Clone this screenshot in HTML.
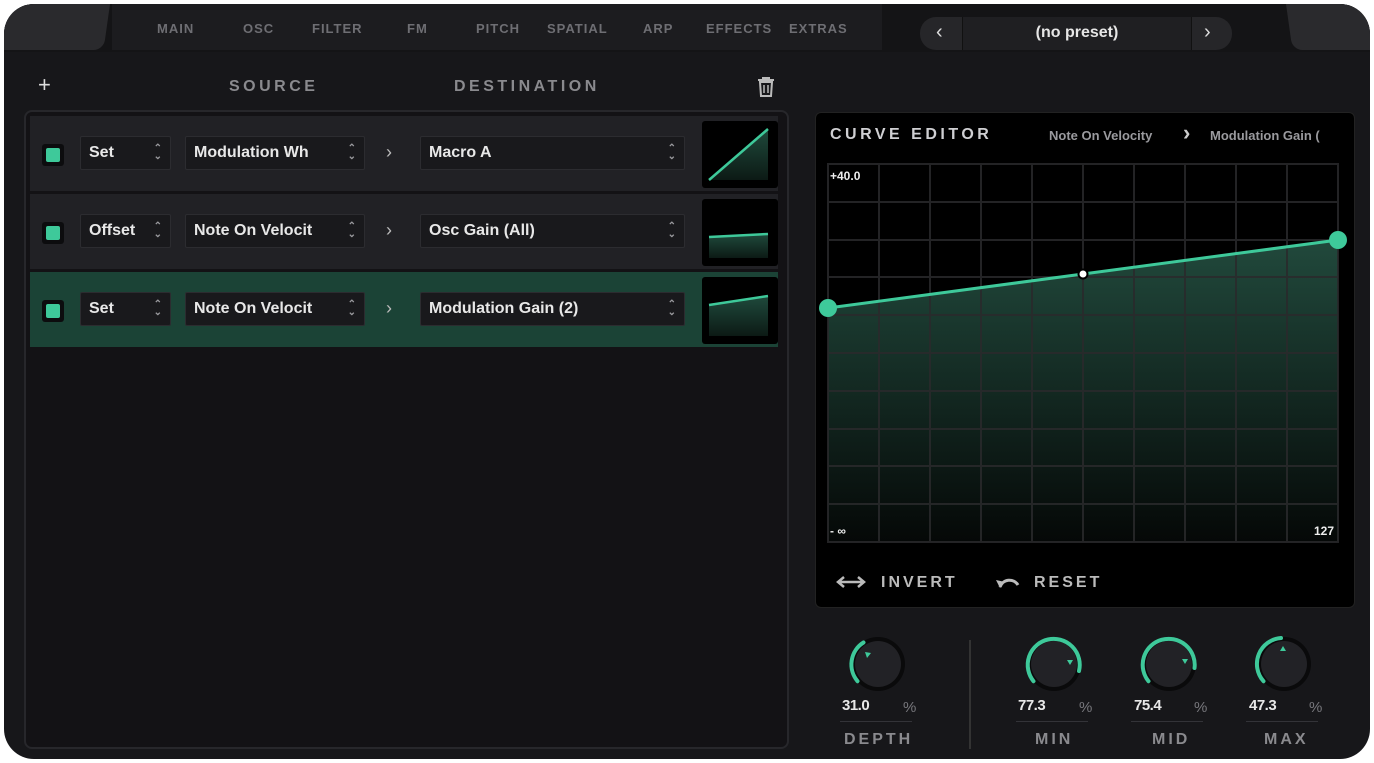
<!DOCTYPE html>
<html><head><meta charset="utf-8"><style>
*{margin:0;padding:0;box-sizing:border-box}
body{width:1374px;height:763px;background:#fff;position:relative;overflow:hidden;font-family:"Liberation Sans",sans-serif;font-weight:bold}
.win{position:absolute;left:4px;top:4px;width:1366px;height:755px;border-radius:30px;background:#17171a;overflow:hidden}
.abs{position:absolute}
.nav{color:#6e6e73;font-size:13px;letter-spacing:1px;top:17px}
.hdr{color:#8a8a8e;font-size:16px;letter-spacing:3.5px;top:74px}
.row{position:absolute;left:30px;width:748px;height:75px;background:#212125}
.dd{position:absolute;top:20px;height:34px;background:#19191c;border:1px solid #2c2c30;border-radius:2px;color:#e8e8e8;font-size:16px;line-height:32px;padding-left:8px;white-space:nowrap;overflow:hidden}
.dd .ud{position:absolute;right:8px;top:0;color:#9a9a9e;font-size:10px;line-height:8px;padding-top:8px;text-align:center}
.cb{position:absolute;left:12px;top:28px;width:22px;height:22px;background:#0c0c0e;border-radius:3px}
.cb:after{content:"";position:absolute;left:4px;top:4px;width:14px;height:14px;background:#3ec99a;border-radius:2px}
.arr{position:absolute;left:356px;top:26px;color:#bbb;font-size:18px;font-weight:normal}
.th{position:absolute;left:672px;top:5px;width:76px;height:67px;background:#000;border-radius:3px}
.val{color:#e8e8e8;font-size:15px;top:693px;letter-spacing:-0.5px}
.pc{color:#77777c;font-size:15px;top:695px;font-weight:normal}
.lb{color:#8a8a8e;font-size:16px;letter-spacing:3px;top:727px}
.ul{height:1px;background:#333338;top:717px}
</style></head><body>
<div class="win">
 <div class="abs" style="left:0;top:0;width:1366px;height:48px;background:#141416"></div>
 <div class="abs" style="left:0;top:0;width:110px;height:46px;background:#2a2a2d;border-bottom-right-radius:10px;transform:skewX(-8deg);transform-origin:top left;left:-4px"></div>
 <div class="abs" style="left:1282px;top:0;width:100px;height:46px;background:#2a2a2d;border-bottom-left-radius:10px;transform:skewX(8deg);transform-origin:top left"></div>
 <div class="abs" style="left:108px;top:0;width:770px;height:46px;background:#1c1c1f"></div>
 <div class="abs nav" style="left:153px">MAIN</div>
 <div class="abs nav" style="left:239px">OSC</div>
 <div class="abs nav" style="left:308px">FILTER</div>
 <div class="abs nav" style="left:403px">FM</div>
 <div class="abs nav" style="left:472px">PITCH</div>
 <div class="abs nav" style="left:543px">SPATIAL</div>
 <div class="abs nav" style="left:639px">ARP</div>
 <div class="abs nav" style="left:702px">EFFECTS</div>
 <div class="abs nav" style="left:785px">EXTRAS</div>
 <div class="abs" style="left:916px;top:13px;width:312px;height:33px;background:#262629;border-radius:16px"></div>
 <div class="abs" style="left:958px;top:13px;width:230px;height:33px;background:#1f1f22;border-left:1px solid #111;border-right:1px solid #111"></div>
 <div class="abs" style="left:932px;top:17px;color:#ddd;font-size:20px;font-weight:normal">‹</div>
 <div class="abs" style="left:1200px;top:17px;color:#ddd;font-size:20px;font-weight:normal">›</div>
 <div class="abs" style="left:958px;top:20px;width:230px;text-align:center;color:#e6e6e6;font-size:16px">(no preset)</div>

 <div class="abs" style="left:34px;top:68px;color:#ddd;font-size:22px;font-weight:normal">+</div>
 <div class="abs hdr" style="left:225px">SOURCE</div>
 <div class="abs hdr" style="left:450px">DESTINATION</div>
 <svg class="abs" style="left:752px;top:72px" width="20" height="22" viewBox="0 0 20 22"><path d="M2 4h16M7 4V2h6v2M4 6l1 14h10l1-14z" fill="none" stroke="#bbb" stroke-width="2"/><path d="M8 9v8M12 9v8" stroke="#bbb" stroke-width="1.5"/></svg>

 <div class="abs" style="left:20px;top:106px;width:765px;height:639px;background:#131215;border:2px solid #27272b;border-radius:8px"></div>
 <div class="row" style="left:26px;top:112px">
  <div class="cb"></div>
  <div class="dd" style="left:50px;width:91px">Set<div class="ud">⌃<br>⌄</div></div>
  <div class="dd" style="left:155px;width:180px">Modulation Wh<div class="ud">⌃<br>⌄</div></div>
  <div class="arr">›</div>
  <div class="dd" style="left:390px;width:265px">Macro A<div class="ud">⌃<br>⌄</div></div>
  <div class="th"><svg width="76" height="67"><defs><linearGradient id="g" x1="0" y1="0" x2="0" y2="1"><stop offset="0" stop-color="#1f4a3c"/><stop offset="1" stop-color="#0c1a15"/></linearGradient></defs><path d="M7 59L66 8V59Z" fill="url(#g)"/><path d="M7 59L66 8" stroke="#3ec99a" stroke-width="2.5"/></svg></div>
 </div>
 <div class="row" style="left:26px;top:190px">
  <div class="cb"></div>
  <div class="dd" style="left:50px;width:91px">Offset<div class="ud">⌃<br>⌄</div></div>
  <div class="dd" style="left:155px;width:180px">Note On Velocit<div class="ud">⌃<br>⌄</div></div>
  <div class="arr">›</div>
  <div class="dd" style="left:390px;width:265px">Osc Gain (All)<div class="ud">⌃<br>⌄</div></div>
  <div class="th"><svg width="76" height="67"><path d="M7 38L66 35V59H7Z" fill="url(#g)"/><path d="M7 38L66 35" stroke="#3ec99a" stroke-width="2.5"/></svg></div>
 </div>
 <div class="row" style="left:26px;top:268px;background:#1b4336">
  <div class="cb"></div>
  <div class="dd" style="left:50px;width:91px">Set<div class="ud">⌃<br>⌄</div></div>
  <div class="dd" style="left:155px;width:180px">Note On Velocit<div class="ud">⌃<br>⌄</div></div>
  <div class="arr">›</div>
  <div class="dd" style="left:390px;width:265px">Modulation Gain (2)<div class="ud">⌃<br>⌄</div></div>
  <div class="th"><svg width="76" height="67"><path d="M7 28L66 19V59H7Z" fill="url(#g)"/><path d="M7 28L66 19" stroke="#3ec99a" stroke-width="2.5"/></svg></div>
 </div>

 <div class="abs" style="left:811px;top:108px;width:540px;height:496px;background:#000;border:1px solid #222;border-radius:6px"></div>
 <div class="abs" style="left:826px;top:122px;color:#cfcfd2;font-size:16px;letter-spacing:3.5px">CURVE EDITOR</div>
 <div class="abs" style="left:1045px;top:124px;color:#9a9a9e;font-size:13px">Note On Velocity</div>
 <div class="abs" style="left:1179px;top:116px;color:#ccc;font-size:22px">›</div>
 <div class="abs" style="left:1206px;top:124px;color:#9a9a9e;font-size:13px">Modulation Gain (</div>
 <svg class="abs" style="left:0;top:0" width="1366" height="755">
  <defs><linearGradient id="cg" x1="0" y1="0" x2="0" y2="1"><stop offset="0" stop-color="#21493c"/><stop offset="1" stop-color="#050807"/></linearGradient></defs>
  <path d="M824 304L1334 236V538H824Z" fill="url(#cg)"/>
  <g stroke="#2a2a2c" stroke-width="2" fill="none" opacity="0.85">
   <rect x="824" y="160" width="510" height="378"/>
   <path d="M875 160V538M926 160V538M977 160V538M1028 160V538M1079 160V538M1130 160V538M1181 160V538M1232 160V538M1283 160V538"/>
   <path d="M824 198H1334M824 236H1334M824 273H1334M824 311H1334M824 349H1334M824 387H1334M824 425H1334M824 462H1334M824 500H1334"/>
  </g>
  <path d="M824 304L1334 236" stroke="#3ec99a" stroke-width="3"/>
  <circle cx="824" cy="304" r="9" fill="#3ec99a"/>
  <circle cx="1334" cy="236" r="9" fill="#3ec99a"/>
  <circle cx="1079" cy="270" r="4.5" fill="#fff" stroke="#000" stroke-width="2"/>
  <text x="826" y="176" fill="#eee" font-size="12" font-weight="bold" font-family="Liberation Sans">+40.0</text>
  <text x="826" y="531" fill="#eee" font-size="12" font-weight="bold" font-family="Liberation Sans">- ∞</text>
  <text x="1310" y="531" fill="#eee" font-size="12" font-weight="bold" font-family="Liberation Sans">127</text>
  <path d="M834 578h26M840 573l-6 5 6 5M854 573l6 5-6 5" stroke="#bbb" stroke-width="2.5" fill="none"/>
  <path d="M996 583a10 10 0 0 1 18 -2" stroke="#bbb" stroke-width="3" fill="none"/><path d="M992 576l4 8 5-6z" fill="#bbb"/>
  <line x1="966" y1="636" x2="966" y2="745" stroke="#333" stroke-width="2"/>
 </svg>
 <div class="abs" style="left:877px;top:570px;color:#bbb;font-size:16px;letter-spacing:3px">INVERT</div>
 <div class="abs" style="left:1030px;top:570px;color:#bbb;font-size:16px;letter-spacing:3px">RESET</div>

 <svg class="abs" style="left:0;top:0" width="1366" height="755">
  <g stroke-linecap="round">
   <circle cx="874" cy="660" r="27" fill="#0a0a0b"/><circle cx="874" cy="660" r="23" fill="#222226"/>
   <path d="M853.5 677.2A26 26 0 0 1 859.5 638.5" stroke="#3ec99a" stroke-width="4" fill="none"/>
   <path d="M861 648l6 1-4 5z" fill="#3ec99a"/>
   <circle cx="1050" cy="660" r="27" fill="#0a0a0b"/><circle cx="1050" cy="660" r="23" fill="#222226"/>
   <path d="M1029.5 677.2A26 26 0 1 1 1075 667" stroke="#3ec99a" stroke-width="4" fill="none"/>
   <path d="M1063 656l6 0-3 5z" fill="#3ec99a"/>
   <circle cx="1165" cy="660" r="27" fill="#0a0a0b"/><circle cx="1165" cy="660" r="23" fill="#222226"/>
   <path d="M1144.5 677.2A26 26 0 1 1 1190.5 664" stroke="#3ec99a" stroke-width="4" fill="none"/>
   <path d="M1178 655l6 0-3 5z" fill="#3ec99a"/>
   <circle cx="1280" cy="660" r="27" fill="#0a0a0b"/><circle cx="1280" cy="660" r="23" fill="#222226"/>
   <path d="M1259.5 677.2A26 26 0 0 1 1277 634" stroke="#3ec99a" stroke-width="4" fill="none"/>
   <path d="M1276 647l3-5 3 5z" fill="#3ec99a"/>
  </g>
 </svg>
 <div class="abs val" style="left:838px">31.0</div><div class="abs pc" style="left:899px">%</div>
 <div class="abs ul" style="left:836px;width:72px"></div>
 <div class="abs lb" style="left:840px">DEPTH</div>
 <div class="abs val" style="left:1014px">77.3</div><div class="abs pc" style="left:1075px">%</div>
 <div class="abs ul" style="left:1012px;width:72px"></div>
 <div class="abs lb" style="left:1031px">MIN</div>
 <div class="abs val" style="left:1130px">75.4</div><div class="abs pc" style="left:1190px">%</div>
 <div class="abs ul" style="left:1127px;width:72px"></div>
 <div class="abs lb" style="left:1148px">MID</div>
 <div class="abs val" style="left:1245px">47.3</div><div class="abs pc" style="left:1305px">%</div>
 <div class="abs ul" style="left:1242px;width:72px"></div>
 <div class="abs lb" style="left:1260px">MAX</div>
</div>
</body></html>
